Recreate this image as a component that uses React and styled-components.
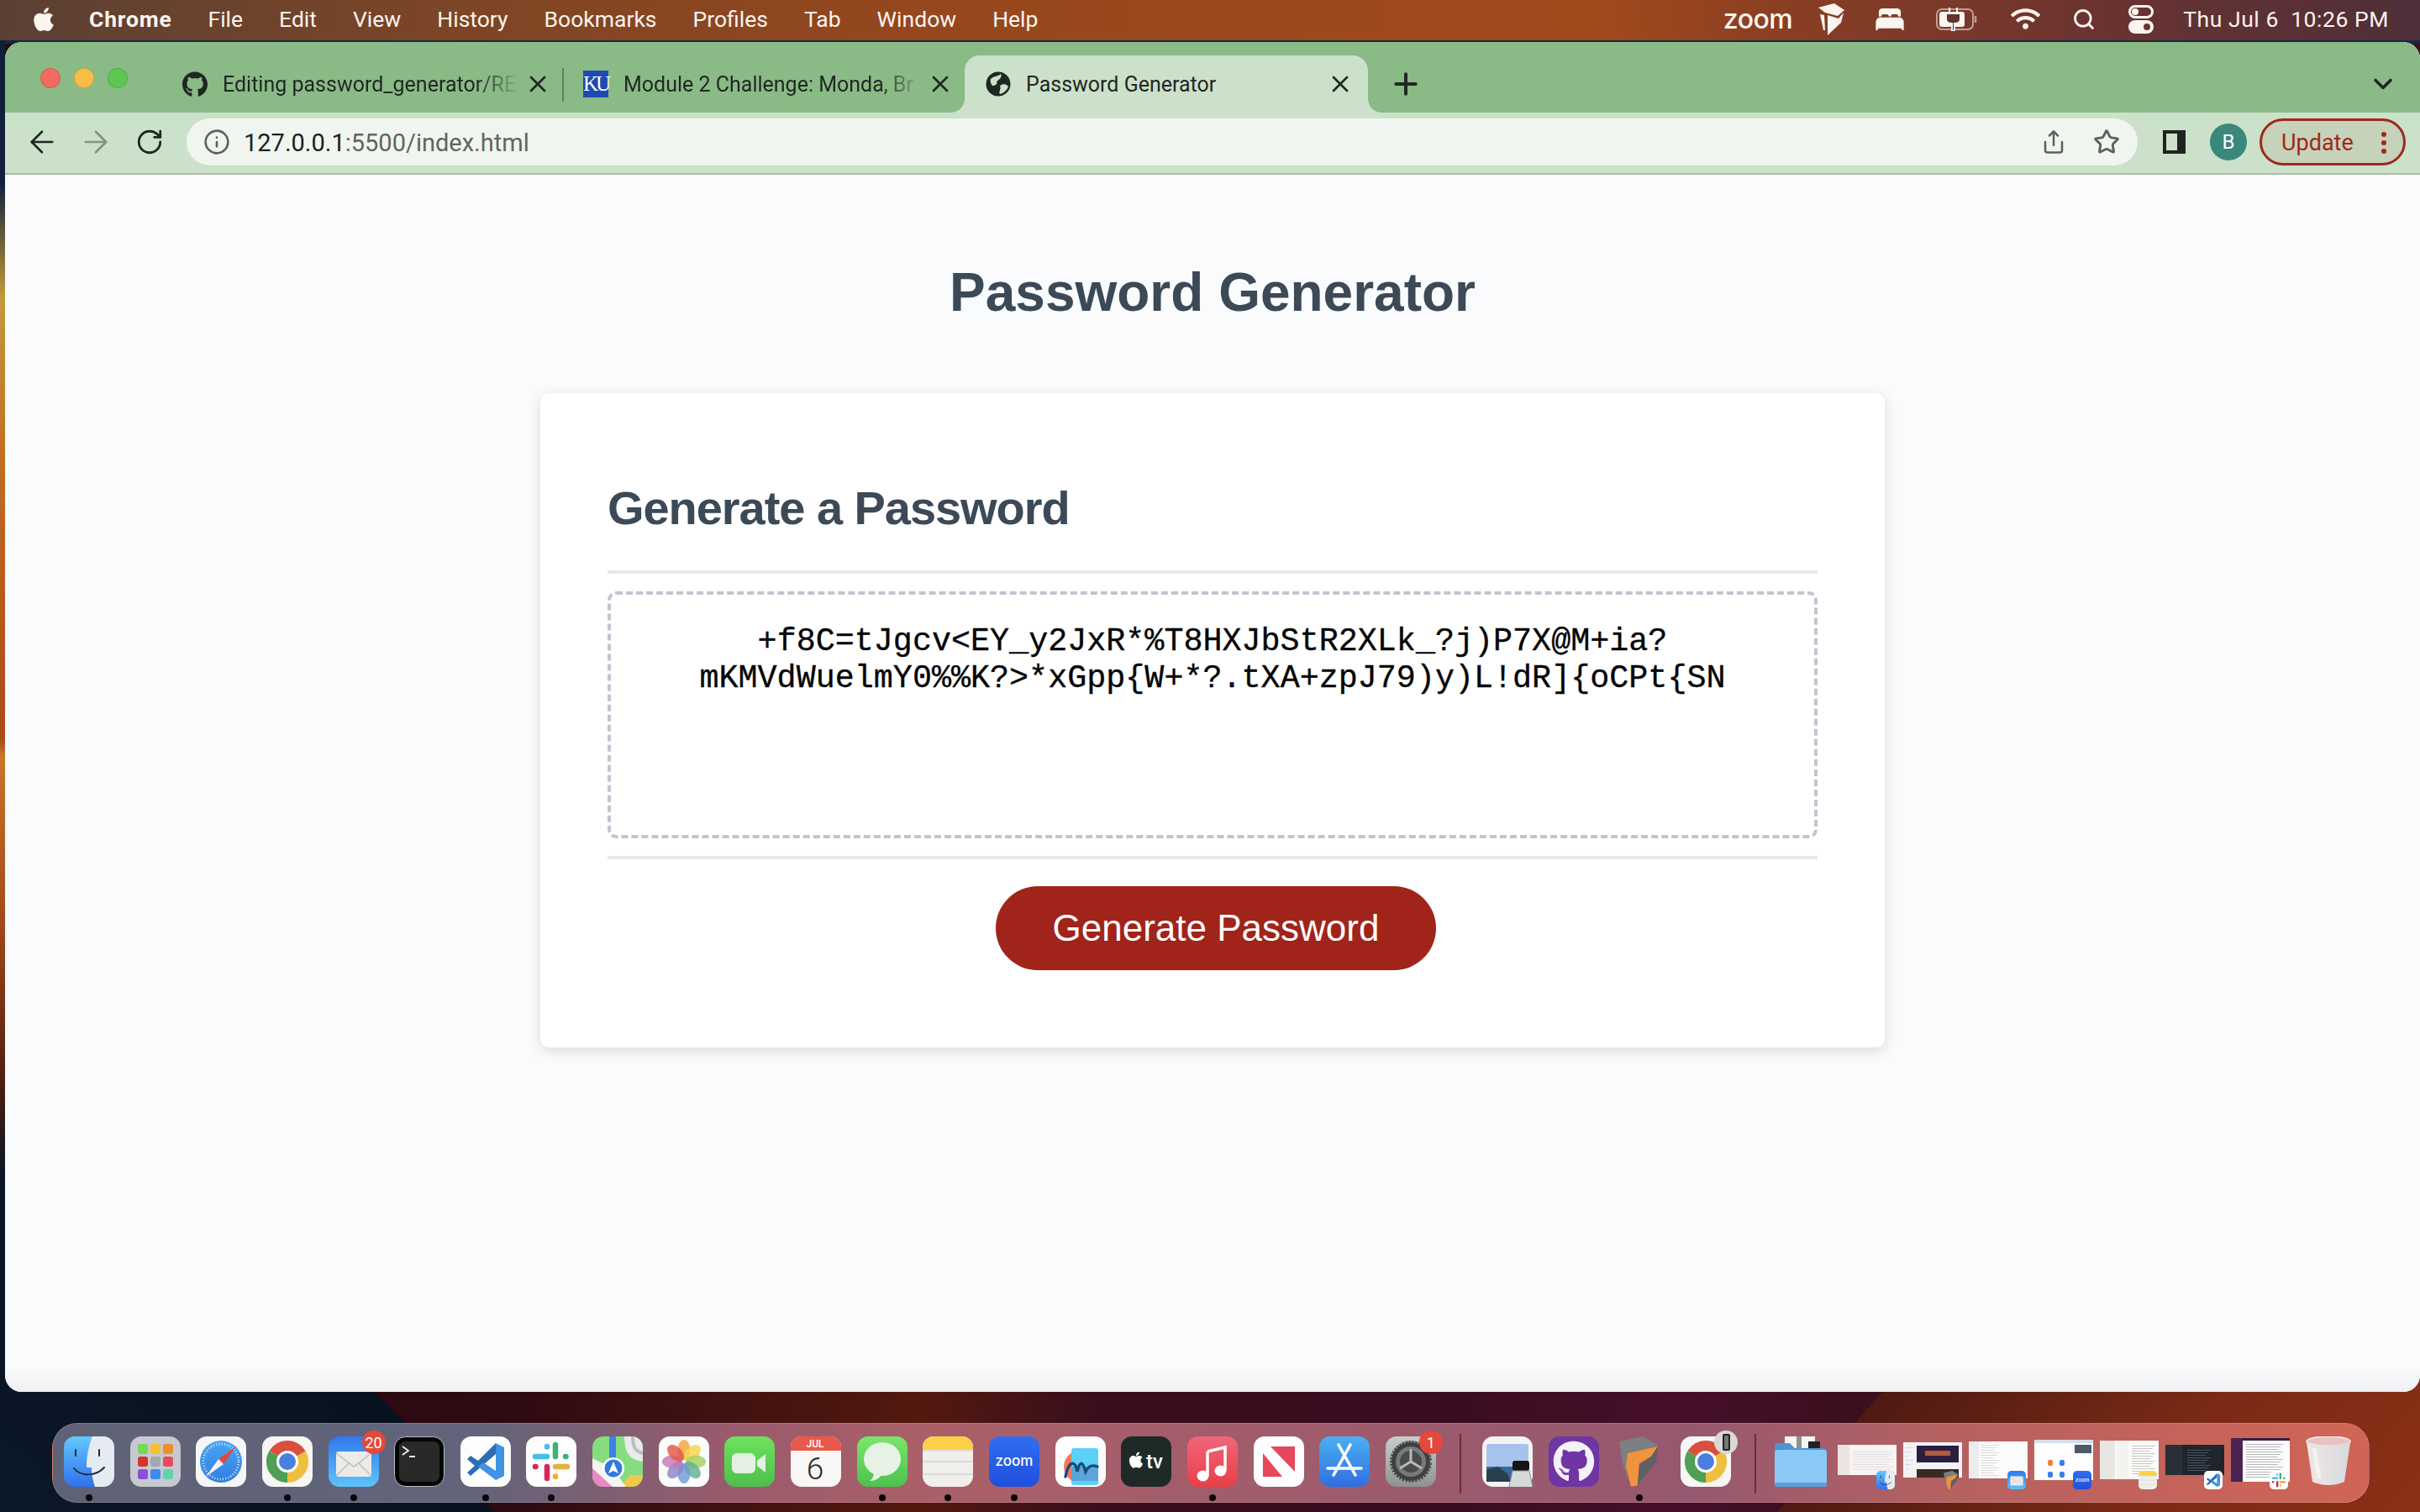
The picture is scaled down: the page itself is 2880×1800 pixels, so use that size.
import React from "react";
import styled, { createGlobalStyle } from "styled-components";
import { FaApple, FaGithub, FaWifi } from "react-icons/fa";
import { IoBed } from "react-icons/io5";
import { ArrowLeft, ArrowRight, RotateCw, Info, Star, Share, Plus, X, ChevronDown, Search } from "lucide-react";

const GlobalStyle = createGlobalStyle`
  html, body {
    margin: 0;
    padding: 0;
    overflow: hidden;
  }
  * {
    box-sizing: border-box;
  }
`;

const UI_FONT = `Roboto, "Liberation Sans", sans-serif`;
const PAGE_FONT = `"Liberation Sans", Arial, sans-serif`;

const Desktop = styled.div`
  width: 2880px;
  height: 1800px;
  display: flex;
  flex-direction: column;
  overflow: hidden;
  background:
    linear-gradient(180deg, #0f1d38 0, #12213d 218px, #c39a3a 354px, #c26a22 560px, #a94a18 880px, #c4772a 900px, #a2481a 1100px, #4a1d10 1295px, #0a1526 1400px) 0 0 / 6px 1660px no-repeat,
    linear-gradient(#16274a, #16274a) 0 48px / 100% 4px no-repeat,
    linear-gradient(131deg, transparent 82.8%, #4e1a13 82.8%, #7a2a15 92%, #8a3016 100%),
    linear-gradient(45deg, #0b1828 0, #08121f 12.6%, transparent 12.6%),
    linear-gradient(90deg, #2a0810 0, #2e0a12 600px, #52190f 1100px, #3a0e1c 1300px, #3a0c20 1700px, #460f2a 2000px, #3c0e1e 2200px);
`;

const MenuBar = styled.header`
  height: 48px;
  flex: none;
  display: flex;
  align-items: center;
  padding: 0 37px 3px 38px;
  color: #fbf4ef;
  font: 400 26.5px ${UI_FONT};
  background: linear-gradient(90deg, #5a4034 0, #7a4526 500px, #96471d 1100px, #a04a1c 1900px, #8c3f22 2100px, #6a3330 2500px, #4e2f39 2880px);
`;

const AppleMark = styled(FaApple)`
  width: 28px;
  height: 32px;
  margin-right: 40px;
`;

const MenuItem = styled.span`
  margin-right: 43px;
  font-weight: ${(p) => (p.$bold ? 700 : 400)};
  letter-spacing: ${(p) => (p.$bold ? "0.8px" : "0")};
`;

const StatusArea = styled.div`
  margin-left: auto;
  display: flex;
  align-items: center;
`;

const ZoomWord = styled.span`
  font: 500 32px Inter, sans-serif;
  letter-spacing: -0.5px;
  margin-right: 30px;
`;

const StatusSlot = styled.span`
  display: flex;
  align-items: center;
  justify-content: center;
  margin-right: ${(p) => p.$gap}px;
`;

const Clock = styled.span`
  white-space: pre;
  letter-spacing: 0.55px;
`;

const BrowserWindow = styled.main`
  margin: 2px 0 0 6px;
  height: 1607px;
  flex: none;
  display: flex;
  flex-direction: column;
  border-radius: 20px;
  overflow: hidden;
  background: #f9fbfd;
`;

const TabStrip = styled.div`
  height: 84px;
  flex: none;
  display: flex;
  padding: 16px 26px 0 42px;
  background: #8aba85;
  color: #1f2723;
  font: 400 25px ${UI_FONT};
`;

const Lights = styled.div`
  display: flex;
  gap: 16px;
  margin: 15px 40px 0 0;
  height: 24px;
`;

const Light = styled.span`
  width: 24px;
  height: 24px;
  border-radius: 50%;
  background: ${(p) => p.$color};
  border: 1px solid rgba(0, 0, 0, 0.12);
`;

const Tab = styled.div`
  position: relative;
  flex: none;
  width: ${(p) => p.$width}px;
  height: 68px;
  display: flex;
  align-items: center;
  padding: 0 ${(p) => p.$right}px 0 ${(p) => p.$pad}px;
  border-radius: 18px 18px 0 0;
  background: ${(p) => (p.$active ? "#cbe1c9" : "transparent")};
  ${(p) =>
    p.$active &&
    `
    &::before, &::after {
      content: "";
      position: absolute;
      bottom: 0;
      width: 16px;
      height: 16px;
    }
    &::before {
      left: -16px;
      background: radial-gradient(circle at 0 0, transparent 15.5px, #cbe1c9 16px);
    }
    &::after {
      right: -16px;
      background: radial-gradient(circle at 100% 0, transparent 15.5px, #cbe1c9 16px);
    }
  `}
`;

const Favicon = styled.span`
  flex: none;
  width: 30px;
  height: 32px;
  margin-right: 18px;
  display: flex;
  align-items: center;
  justify-content: center;
`;

const TabTitle = styled.span`
  flex: 1;
  min-width: 0;
  white-space: nowrap;
  ${(p) =>
    p.$fade &&
    `
    mask-image: linear-gradient(90deg, #000 calc(100% - 50px), transparent 100%);
  `}
`;

const TabClose = styled(X)`
  flex: none;
  width: 32px;
  height: 32px;
  margin: 0 -5px 0 7px;
`;

const TabSeparator = styled.span`
  flex: none;
  width: 2px;
  height: 40px;
  margin-top: 15px;
  background: #5f8059;
`;

const KuBadge = styled.span`
  width: 32px;
  height: 32px;
  background: #2049b3;
  color: #fff;
  font: 400 25px "Liberation Serif", serif;
  letter-spacing: -3px;
  display: flex;
  align-items: center;
  justify-content: center;
`;

const NewTab = styled(Plus)`
  width: 40px;
  height: 40px;
  margin: 14px 0 0 25px;
  color: #1f2723;
`;

const TabList = styled(ChevronDown)`
  width: 36px;
  height: 36px;
  margin: 16px 0 0 auto;
  color: #1f2723;
`;

const Toolbar = styled.div`
  height: 74px;
  flex: none;
  display: flex;
  align-items: center;
  padding: 0 17px 2px 23px;
  background: #cbe1c9;
  border-bottom: 2px solid #a8b9a4;
`;

const NavButtons = styled.div`
  display: flex;
  gap: 22px;
  margin-right: 23px;
`;

const NavIcon = styled.span`
  width: 42px;
  height: 42px;
  display: flex;
  align-items: center;
  justify-content: center;
  color: ${(p) => (p.$dim ? "#7f9580" : "#1f2723")};
`;

const Omnibox = styled.div`
  flex: 1;
  height: 56px;
  border-radius: 28px;
  background: #f0f6ef;
  display: flex;
  align-items: center;
  padding: 2px 21px 0 20px;
  font: 400 29px ${UI_FONT};
  color: #5e6661;
`;

const UrlHost = styled.span`
  color: #1c211e;
`;

const InfoIcon = styled(Info)`
  width: 32px;
  height: 32px;
  margin: -2px 16px 0 0;
  color: #5b625e;
`;

const OmniActions = styled.div`
  margin: -2px 0 0 auto;
  display: flex;
  align-items: center;
  gap: 32px;
  color: #5b625e;
`;

const PanelIcon = styled.span`
  flex: none;
  width: 27px;
  height: 28px;
  margin: 0 29px 0 30px;
  border: solid #1f2421;
  border-width: 4px 10px 4px 4px;
`;

const Avatar = styled.span`
  flex: none;
  width: 44px;
  height: 44px;
  margin-right: 15px;
  border-radius: 50%;
  background: #3a877b;
  color: #fff;
  font: 400 24px ${UI_FONT};
  display: flex;
  align-items: center;
  justify-content: center;
`;

const UpdateButton = styled.div`
  flex: none;
  width: 174px;
  height: 56px;
  border-radius: 28px;
  border: 3px solid #9c2a1e;
  background: #c6d2b9;
  color: #a0281c;
  font: 400 27px ${UI_FONT};
  display: flex;
  align-items: center;
  padding: 2px 0 0 23px;
`;

const KebabDots = styled.span`
  margin-left: auto;
  margin-right: 20px;
  display: flex;
  flex-direction: column;
  gap: 4px;
`;

const KebabDot = styled.i`
  width: 6px;
  height: 6px;
  border-radius: 50%;
  background: #a0281c;
`;

const PageBody = styled.div`
  flex: 1;
  min-height: 0;
  display: flex;
  flex-direction: column;
  align-items: center;
  background: linear-gradient(180deg, #f9fbfd calc(100% - 30px), #eff0f2 100%);
`;

const PageTitle = styled.h1`
  margin: 102px 0 0;
  height: 76px;
  font: 700 64px/76px ${PAGE_FONT};
  color: #3c4957;
`;

const Card = styled.section`
  width: 1600px;
  height: 779px;
  margin-top: 82px;
  padding: 104px 80px 0;
  border-radius: 10px;
  background: #fff;
  box-shadow: 0 4px 16px rgba(0, 0, 0, 0.14);
`;

const CardTitle = styled.h2`
  margin: 0;
  height: 107px;
  font: 700 56px/66px ${PAGE_FONT};
  letter-spacing: -1.05px;
  color: #3c4957;
`;

const Rule = styled.hr`
  margin: 0;
  height: 4px;
  border: none;
  background: #e6e8eb;
`;

const PasswordBox = styled.div`
  height: 294px;
  margin: 21px 0;
  padding: 34px 20px 0;
  border: 4px dashed #c0c6cf;
  border-radius: 10px;
  text-align: center;
  color: #050505;
  font: 400 38.4px/44px "Liberation Mono", "Courier New", monospace;
  -webkit-text-stroke: 0.35px #050505;
`;

const ButtonRow = styled.div`
  display: flex;
  justify-content: center;
  margin-top: 32px;
  padding-left: 8px;
`;

const GenerateButton = styled.button`
  width: 524px;
  height: 100px;
  border: none;
  border-radius: 50px;
  background: #a0241a;
  color: #fff;
  font: 400 44px ${PAGE_FONT};
  cursor: pointer;
`;

const DockWrap = styled.footer`
  margin: 37px 0 0 62px;
  width: 2758px;
  height: 95px;
  flex: none;
  display: flex;
  align-items: flex-start;
  gap: 18.65px;
  padding: 15px 0 0 13px;
  border-radius: 30px;
  border: 1px solid rgba(255, 255, 255, 0.16);
  background: linear-gradient(90deg, #5f6277 0, #61647a 500px, #9a5a6c 800px, #ab6068 1050px, #9e5c6c 1500px, #96586f 1950px, #b56162 2250px, #d06555 2758px);
`;

const Slot = styled.div`
  position: relative;
  flex: none;
  width: ${(p) => p.$width || 60}px;
  height: 60px;
`;

const RunDot = styled.span`
  position: absolute;
  left: 50%;
  bottom: -17px;
  width: 8px;
  height: 8px;
  margin-left: -4px;
  border-radius: 50%;
  background: #0a0508;
`;

const Badge = styled.span`
  position: absolute;
  top: -7px;
  right: -8px;
  min-width: 28px;
  height: 28px;
  border-radius: 50%;
  background: #e5483a;
  color: #fff;
  font: 400 18px ${UI_FONT};
  display: flex;
  align-items: center;
  justify-content: center;
`;

const DeviceBadge = styled(Badge)`
  background: #d9d9d7;
`;

const DeviceGlyph = styled.i`
  width: 9px;
  height: 20px;
  border: 2px solid #222;
  border-radius: 2px;
  background: #777;
`;

const DockDivider = styled.span`
  flex: none;
  width: 2px;
  height: 71px;
  margin: -3px ${(p) => p.$right}px 0 ${(p) => p.$left}px;
  background: #6d2a3f;
`;

const ThumbGroup = styled.div`
  display: flex;
  gap: 8px;
  margin-left: -6px;
`;

const ThumbSlot = styled.div`
  position: relative;
  flex: none;
  width: 70px;
  height: 60px;
  display: flex;
  align-items: center;
  justify-content: center;
  padding-bottom: 4px;
`;

const MiniIcon = styled.span`
  position: absolute;
  right: 2px;
  bottom: -3px;
  width: 22px;
  height: 22px;
  display: flex;
`;

const Sq = ({ fill }) => <rect width="60" height="60" rx="13" fill={fill} />;

const Art = ({ size = 60, children }) => (
  <svg width={size} height={size} viewBox="0 0 60 60" style={{ display: "block" }}>
    {children}
  </svg>
);

const Grad = ({ id, from, to, x2 = 0, y2 = 1 }) => (
  <linearGradient id={id} x1="0" y1="0" x2={x2} y2={y2}>
    <stop offset="0" stopColor={from} />
    <stop offset="1" stopColor={to} />
  </linearGradient>
);

const Finder = ({ size }) => (
  <Art size={size}>
    <defs>
      <Grad id="fnd" from="#62c8fb" to="#2f72ee" />
    </defs>
    <Sq fill="url(#fnd)" />
    <path d="M34 0 H47 A13 13 0 0 1 60 13 V47 A13 13 0 0 1 47 60 H37 C34 50 33 44 33 37 H27 C27 22 30 10 34 0 Z" fill="#e6ebf2" />
    <path d="M14 16 v7 M42 16 v7" stroke="#1d2a3c" strokeWidth="2" strokeLinecap="round" />
    <path d="M12 38 C20 48 38 48 48 37" stroke="#1d2a3c" strokeWidth="2" fill="none" strokeLinecap="round" />
  </Art>
);

const Launchpad = ({ size }) => {
  const colors = ["#72dc50", "#f5c12e", "#ec8f2c", "#d2352b", "#a4a9ad", "#e94b5b", "#8a4fd8", "#3d8bf0", "#62d4ab"];
  return (
    <Art size={size}>
      <Sq fill="#c6c9cf" />
      {colors.map((c, i) => (
        <rect key={c} x={9 + (i % 3) * 15} y={9 + Math.floor(i / 3) * 15} width="12" height="12" rx="3" fill={c} />
      ))}
    </Art>
  );
};

const Safari = ({ size }) => (
  <Art size={size}>
    <defs>
      <Grad id="saf" from="#4ba6f3" to="#2f7de0" />
    </defs>
    <Sq fill="#f5f6f7" />
    <circle cx="30" cy="30" r="25" fill="url(#saf)" />
    <circle cx="30" cy="30" r="21" fill="none" stroke="#d5e8fb" strokeWidth="3" strokeDasharray="1 2.3" />
    <path d="M48 12 L33 33 L27 27 Z" fill="#e8453c" />
    <path d="M12 48 L27 27 L33 33 Z" fill="#f4f4f4" />
  </Art>
);

const Chrome = ({ size }) => (
  <Art size={size}>
    <Sq fill="#f6f6f5" />
    <path d="M30 30 L8.3 17.5 A25 25 0 0 1 51.7 17.5 Z" fill="#d8503f" />
    <path d="M30 30 L51.7 17.5 A25 25 0 0 1 30 55 Z" fill="#efbf42" />
    <path d="M30 30 L30 55 A25 25 0 0 1 8.3 17.5 Z" fill="#4f9f55" />
    <circle cx="30" cy="30" r="13" fill="#fff" />
    <circle cx="30" cy="30" r="10" fill="#4a7fe0" />
  </Art>
);

const Mail = ({ size }) => (
  <Art size={size}>
    <defs>
      <Grad id="mail" from="#3278ee" to="#5cc4f8" />
    </defs>
    <Sq fill="url(#mail)" />
    <rect x="9" y="18" width="42" height="30" rx="3" fill="#ecebe8" />
    <path d="M9 20 L30 36 L51 20 M9 47 L24 32 M51 47 L36 32" fill="none" stroke="#bdbdb9" strokeWidth="1.4" />
  </Art>
);

const Terminal = ({ size }) => (
  <Art size={size}>
    <rect x="0.5" y="0.5" width="59" height="59" rx="13" fill="#050505" stroke="#b4c0c4" />
    <rect x="6" y="6" width="48" height="48" rx="7" fill="#292929" />
    <path d="M10 12 L17 17 L10 22" fill="none" stroke="#f2f2f2" strokeWidth="1.8" />
    <path d="M18 24 H25" stroke="#f2f2f2" strokeWidth="2" />
  </Art>
);

const VSCode = ({ size }) => (
  <Art size={size}>
    <Sq fill="#fdfdfd" />
    <path d="M8 27 L12 23 L21 29 L42 8 V21 L27 34 L12 47 L8 43 L17 35 Z" fill="#2a6db5" />
    <path d="M42 8 L52 13 V47 L42 52 L21 36 L27 31 L42 41 Z" fill="#3f93e2" />
  </Art>
);

const Slack = ({ size }) => (
  <Art size={size}>
    <Sq fill="#fdfdfd" />
    <g fill="none" strokeWidth="6.5" strokeLinecap="round">
      <path d="M11 24 H25 M25 12 V12.5" stroke="#45bfe6" />
      <path d="M35 10 V24 M47 24 H47.5" stroke="#3fb07d" />
      <path d="M35 36 H49 M35 48 V47.5" stroke="#e3b33c" />
      <path d="M25 36 V50 M11 36 H11.5" stroke="#d8265a" />
    </g>
  </Art>
);

const Maps = ({ size }) => (
  <Art size={size}>
    <defs>
      <clipPath id="mapclip">
        <rect width="60" height="60" rx="13" />
      </clipPath>
    </defs>
    <g clipPath="url(#mapclip)">
      <rect width="60" height="60" fill="#85dd80" />
      <path d="M0 30 L24 60 H0 Z" fill="#e58ac2" />
      <path d="M34 60 L60 60 V46 L44 46 Z" fill="#f0c84a" />
      <path d="M0 26 L24 38 L40 60 H24 L0 38 Z" fill="#f4f4f0" />
      <path d="M60 0 H38 C38 22 46 28 60 30 Z" fill="#e8ebe8" />
      <path d="M48 0 C48 14 52 18 60 20" fill="none" stroke="#bcbec0" strokeWidth="4" />
      <rect x="20" y="0" width="8" height="28" fill="#3c82ea" />
      <circle cx="25" cy="38" r="13" fill="#fff" />
      <circle cx="25" cy="38" r="10.5" fill="#3278e0" />
      <path d="M25 30 L31 44 L25 41 L19 44 Z" fill="#fff" />
    </g>
  </Art>
);

const Photos = ({ size }) => {
  const petals = ["#f2a53a", "#f3d64e", "#a7cf5f", "#60b08f", "#6e9bd8", "#8d84cb", "#c677b8", "#e2574a"];
  return (
    <Art size={size}>
      <Sq fill="#fbfbfa" />
      {petals.map((c, i) => (
        <ellipse key={c} cx="30" cy="16" rx="7.5" ry="12" fill={c} opacity="0.82" transform={`rotate(${i * 45} 30 30)`} />
      ))}
    </Art>
  );
};

const FaceTime = ({ size }) => (
  <Art size={size}>
    <defs>
      <Grad id="ft" from="#6fe15e" to="#4cc04c" />
    </defs>
    <Sq fill="url(#ft)" />
    <rect x="9" y="20" width="28" height="24" rx="6" fill="#e4f1e2" />
    <path d="M39 29 L49 21 V43 L39 35 Z" fill="#e4f1e2" />
  </Art>
);

const Calendar = ({ size }) => (
  <Art size={size}>
    <Sq fill="#f8f7f5" />
    <path d="M0 17 V13 A13 13 0 0 1 13 0 H47 A13 13 0 0 1 60 13 V17 Z" fill="#e8594c" />
    <text x="29" y="13" textAnchor="middle" fontFamily="Roboto, sans-serif" fontSize="12" fontWeight="500" fill="#fff">JUL</text>
    <text x="29" y="51" textAnchor="middle" fontFamily="Roboto, sans-serif" fontSize="37" fontWeight="300" fill="#2a2a2a">6</text>
  </Art>
);

const Messages = ({ size }) => (
  <Art size={size}>
    <defs>
      <Grad id="msg" from="#7be56a" to="#4cc24e" />
    </defs>
    <Sq fill="url(#msg)" />
    <ellipse cx="30" cy="27" rx="22" ry="20" fill="#e6f2e3" />
    <path d="M20 42 C20 48 18 51 15 53 C22 53 26 50 29 46 Z" fill="#e6f2e3" />
  </Art>
);

const Notes = ({ size }) => (
  <Art size={size}>
    <Sq fill="#f1efeb" />
    <path d="M0 16 V13 A13 13 0 0 1 13 0 H47 A13 13 0 0 1 60 13 V16 Z" fill="#fbd14a" />
    <path d="M0 17 H60" stroke="#a9a7a2" strokeWidth="1" strokeDasharray="1 1" />
    <path d="M0 30 H60 M0 45 H60" stroke="#dcdbdb" strokeWidth="2" />
  </Art>
);

const ZoomApp = ({ size }) => (
  <Art size={size}>
    <defs>
      <Grad id="zm" from="#2f6ff0" to="#1f4fdd" />
    </defs>
    <Sq fill="url(#zm)" />
    <text x="30" y="35" textAnchor="middle" fontFamily="Inter, sans-serif" fontSize="17" fontWeight="500" fill="#fff">zoom</text>
  </Art>
);

const Freeform = ({ size }) => (
  <Art size={size}>
    <Sq fill="#fdfdfd" />
    <circle cx="29" cy="36" r="19" fill="#ee7a5c" />
    <rect x="19" y="14" width="32" height="44" rx="3" fill="#5cd0f5" />
    <rect x="19" y="36" width="32" height="17" fill="#5aa6dc" />
    <path d="M12 48 C16 28 24 28 26 42 C29 30 32 28 36 42 C40 34 44 34 50 36" fill="none" stroke="#1b4a78" strokeWidth="3.4" strokeLinecap="round" />
  </Art>
);

const AppleTv = ({ size }) => (
  <Art size={size}>
    <Sq fill="#1d2a28" />
    <FaApple x="7" y="17" size="22" color="#fff" />
    <text x="30" y="38" fontFamily="Roboto, sans-serif" fontSize="24" fontWeight="500" fill="#fff">tv</text>
  </Art>
);

const Music = ({ size }) => (
  <Art size={size}>
    <defs>
      <Grad id="mus" from="#f0667a" to="#e83f48" />
    </defs>
    <Sq fill="url(#mus)" />
    <path d="M24 18 L45 13 V40 M24 18 V47" fill="none" stroke="#fff" strokeWidth="3.5" />
    <ellipse cx="18.5" cy="47" rx="7" ry="6.5" fill="#fff" />
    <ellipse cx="39.5" cy="41" rx="7" ry="6.5" fill="#fff" />
  </Art>
);

const News = ({ size }) => (
  <Art size={size}>
    <Sq fill="#fdfdfd" />
    <path d="M11 12 H19 L49 40 V48 H41 L11 20 Z" fill="#fdfdfd" />
    <path d="M11 20 L34 48 H11 Z" fill="#e6475a" />
    <path d="M20 12 H49 V42 Z" fill="#e6475a" />
  </Art>
);

const AppStore = ({ size }) => (
  <Art size={size}>
    <defs>
      <Grad id="aps" from="#4cb0f3" to="#2f6fe0" />
    </defs>
    <Sq fill="url(#aps)" />
    <path d="M23 10 L43 46 M37 10 L17 46 M10 38 H50" stroke="#fff" strokeWidth="3.6" strokeLinecap="round" fill="none" />
  </Art>
);

const Settings = ({ size }) => (
  <Art size={size}>
    <defs>
      <Grad id="set" from="#c9cdcd" to="#8e9290" />
    </defs>
    <Sq fill="url(#set)" />
    <circle cx="30" cy="30" r="25" fill="#3e4140" />
    <circle cx="30" cy="30" r="24" fill="none" stroke="#9a9d9c" strokeWidth="2.4" strokeDasharray="2 2" />
    <circle cx="30" cy="30" r="18" fill="#77797a" />
    <circle cx="30" cy="30" r="13" fill="#4a4c4c" />
    <path d="M30 30 V15 M30 30 L17 38 M30 30 L43 38" stroke="#b9bbba" strokeWidth="3" />
  </Art>
);

const Preview = ({ size }) => (
  <Art size={size}>
    <Sq fill="#f3f3f1" />
    <rect x="5" y="9" width="50" height="45" rx="3" fill="#a6c3ee" />
    <rect x="5" y="36" width="50" height="18" fill="#356a9a" />
    <path d="M5 40 L18 36 L30 44 L34 54 H5 Z" fill="#2b3e50" />
    <rect x="36" y="29" width="20" height="12" rx="3" fill="#151515" />
    <path d="M36 41 H56 L60 60 Q46 66 32 60 Z" fill="#d5dad9" stroke="#8c9192" />
  </Art>
);

const GithubDesktop = ({ size }) => (
  <Art size={size}>
    <Sq fill="#6e35a3" />
    <FaGithub x="5" y="5" size="50" color="#f5f1f8" />
  </Art>
);

const Vpn = ({ size }) => (
  <Art size={size}>
    <path d="M6 6 L34 0 L52 10 L42 22 L16 20 L16 50 L10 32 Z" fill="#7c7f80" />
    <path d="M16 20 L52 12 L44 24 L30 32 L28 58 L20 60 L14 36 Z" fill="#f0933d" />
    <path d="M44 24 L52 12 L50 30 L28 58 L30 34 Z" fill="#5e6162" />
  </Art>
);

const Folder = () => (
  <svg width="62" height="60" viewBox="0 0 62 60" style={{ display: "block" }}>
    <rect x="12" y="0" width="36" height="22" fill="#f4f4f4" />
    <rect x="26" y="0" width="6" height="14" fill="#8f9090" />
    <rect x="40" y="6" width="14" height="16" fill="#222" />
    <path d="M0 12 Q0 8 4 8 H18 L24 14 H58 Q62 14 62 18 V24 H0 Z" fill="#4f94d6" />
    <rect x="0" y="16" width="62" height="44" rx="4" fill="#8ac9f6" />
    <rect x="0" y="55" width="62" height="5" rx="2" fill="#5a9fda" />
  </svg>
);

const Trash = () => (
  <svg width="54" height="60" viewBox="0 0 54 60" style={{ display: "block" }}>
    <defs>
      <Grad id="trs" from="#f0e6e6" to="#d6dbdd" x2="1" y2="0" />
    </defs>
    <ellipse cx="27" cy="6" rx="26" ry="6" fill="#e8c2c0" stroke="#f2f2f2" strokeWidth="1.5" />
    <path d="M1 7 L8 54 Q27 62 46 54 L53 7 Q27 14 1 7 Z" fill="url(#trs)" />
    <path d="M10 14 L16 50" stroke="#fff" strokeWidth="5" opacity="0.55" />
  </svg>
);

const ThumbArt = ({ h, bg, children }) => (
  <svg width="70" height={h} viewBox={`0 0 70 ${h}`} style={{ display: "block" }}>
    <rect width="70" height={h} fill={bg} />
    {children}
  </svg>
);

const lines = (x, y, w, n, step, color) =>
  Array.from({ length: n }, (_, i) => (
    <rect key={`${x}-${i}`} x={x} y={y + i * step} width={w - (i % 3) * 3} height="1" fill={color} opacity="0.6" />
  ));

const thumbs = [
  {
    id: "finder",
    mini: Finder,
    art: (
      <ThumbArt h={36} bg="#f9f3f3">
        <rect width="14" height="36" fill="#ece3e3" />
        {lines(18, 8, 48, 8, 3, "#cdd3dc")}
      </ThumbArt>
    ),
  },
  {
    id: "vpn",
    mini: Vpn,
    art: (
      <ThumbArt h={42} bg="#f3f3f5">
        <rect x="16" y="4" width="50" height="20" fill="#2c1f3f" />
        <rect x="26" y="10" width="30" height="6" fill="#b25a3c" />
        <rect x="16" y="32" width="50" height="10" fill="#3a2a22" />
        {lines(2, 6, 10, 6, 5, "#c8c8d0")}
      </ThumbArt>
    ),
  },
  {
    id: "mail",
    mini: Mail,
    art: (
      <ThumbArt h={44} bg="#fbfbfb">
        <rect width="12" height="44" fill="#ececec" />
        {lines(14, 4, 22, 13, 3, "#c4c4c4")}
      </ThumbArt>
    ),
  },
  {
    id: "zoom",
    mini: ZoomApp,
    art: (
      <ThumbArt h={48} bg="#fdfdfd">
        <rect width="70" height="4" fill="#d6dee8" />
        <rect x="48" y="6" width="20" height="10" fill="#4a5a6a" />
        <rect x="16" y="24" width="6" height="7" rx="2" fill="#ee8136" />
        <rect x="30" y="24" width="6" height="7" rx="2" fill="#3b7ee8" />
        <rect x="16" y="38" width="6" height="7" rx="2" fill="#3b7ee8" />
        <rect x="30" y="38" width="6" height="7" rx="2" fill="#3b7ee8" />
      </ThumbArt>
    ),
  },
  {
    id: "notes",
    mini: Notes,
    art: (
      <ThumbArt h={46} bg="#fbfbfa">
        <rect width="18" height="46" fill="#e8e6e2" />
        <rect x="20" width="14" height="46" fill="#f4f3f0" />
        {lines(38, 6, 28, 12, 3, "#a9a5a0")}
      </ThumbArt>
    ),
  },
  {
    id: "vscode",
    mini: VSCode,
    art: (
      <ThumbArt h={36} bg="#20252b">
        <rect width="20" height="36" fill="#2a2f36" />
        {lines(26, 6, 28, 9, 3, "#5c7486")}
      </ThumbArt>
    ),
  },
  {
    id: "slack",
    mini: Slack,
    art: (
      <ThumbArt h={52} bg="#fbfbfb">
        <rect width="70" height="3" fill="#3c1d44" />
        <rect width="14" height="52" fill="#4a2352" />
        {lines(18, 7, 44, 14, 3, "#8c8c8c")}
      </ThumbArt>
    ),
  },
];

const dockApps = [
  { id: "finder", Icon: Finder, dot: true },
  { id: "launchpad", Icon: Launchpad },
  { id: "safari", Icon: Safari },
  { id: "chrome", Icon: Chrome, dot: true },
  { id: "mail", Icon: Mail, dot: true, badge: "20" },
  { id: "terminal", Icon: Terminal },
  { id: "vscode", Icon: VSCode, dot: true },
  { id: "slack", Icon: Slack, dot: true },
  { id: "maps", Icon: Maps },
  { id: "photos", Icon: Photos },
  { id: "facetime", Icon: FaceTime },
  { id: "calendar", Icon: Calendar },
  { id: "messages", Icon: Messages, dot: true },
  { id: "notes", Icon: Notes, dot: true },
  { id: "zoom", Icon: ZoomApp, dot: true },
  { id: "freeform", Icon: Freeform },
  { id: "tv", Icon: AppleTv },
  { id: "music", Icon: Music, dot: true },
  { id: "news", Icon: News },
  { id: "appstore", Icon: AppStore },
  { id: "settings", Icon: Settings, badge: "1" },
];

const BatteryGlyph = () => (
  <svg width="50" height="28" viewBox="0 0 50 28">
    <rect x="1" y="2" width="43" height="24" rx="6" fill="none" stroke="#fbf4ef" strokeOpacity="0.55" strokeWidth="2" />
    <rect x="4" y="5" width="30" height="18" rx="3" fill="#fbf4ef" />
    <path d="M47 10 V18" stroke="#fbf4ef" strokeOpacity="0.55" strokeWidth="2.5" />
    <path d="M16 0 V8 M25 0 V8 M12 7 H29 V14 Q29 19 22 19 V28 H19 V19 Q12 19 12 14 Z" fill="#5e3530" stroke="#fbf4ef" strokeWidth="2" />
  </svg>
);

const ControlGlyph = () => (
  <svg width="30" height="34" viewBox="0 0 30 34">
    <rect x="1.5" y="1.5" width="27" height="13" rx="6.5" fill="none" stroke="#fbf4ef" strokeWidth="3" />
    <circle cx="8" cy="8" r="4" fill="#fbf4ef" />
    <rect x="0" y="18" width="30" height="16" rx="8" fill="#fbf4ef" />
    <circle cx="22" cy="26" r="4" fill="#6a3330" />
  </svg>
);

const VpnGlyph = () => (
  <svg width="32" height="38" viewBox="0 0 32 38">
    <path d="M1 5 L20 0 L32 8 L24 15 L9 11 Z" fill="#fbf4ef" />
    <path d="M3 13 L8 14 L9 32 L7 32 Z" fill="#fbf4ef" />
    <path d="M12 14 L25 18 L31 11 L28 23 L12 38 Z" fill="#fbf4ef" />
  </svg>
);

const App = () => {
  const menus = ["File", "Edit", "View", "History", "Bookmarks", "Profiles", "Tab", "Window", "Help"];

  return (
    <Desktop>
      <GlobalStyle />
      <MenuBar>
        <AppleMark />
        <MenuItem $bold>Chrome</MenuItem>
        {menus.map((m) => (
          <MenuItem key={m}>{m}</MenuItem>
        ))}
        <StatusArea>
          <ZoomWord>zoom</ZoomWord>
          <StatusSlot $gap={35}><VpnGlyph /></StatusSlot>
          <StatusSlot $gap={36}><IoBed size={38} /></StatusSlot>
          <StatusSlot $gap={39}><BatteryGlyph /></StatusSlot>
          <StatusSlot $gap={38}><FaWifi size={35} /></StatusSlot>
          <StatusSlot $gap={39}><Search size={28} strokeWidth={2.4} /></StatusSlot>
          <StatusSlot $gap={35}><ControlGlyph /></StatusSlot>
          <Clock>Thu Jul 6  10:26 PM</Clock>
        </StatusArea>
      </MenuBar>

      <BrowserWindow>
        <TabStrip>
          <Lights>
            <Light $color="#f36a60" />
            <Light $color="#f8bd47" />
            <Light $color="#5ec655" />
          </Lights>
          <Tab $width={477} $pad={25} $right={18}>
            <Favicon><FaGithub size={31} color="#1f2723" /></Favicon>
            <TabTitle $fade>Editing password_generator/RE</TabTitle>
            <TabClose />
          </Tab>
          <TabSeparator />
          <Tab $width={477} $pad={23} $right={18}>
            <Favicon><KuBadge>KU</KuBadge></Favicon>
            <TabTitle $fade>Module 2 Challenge: Monda, Br</TabTitle>
            <TabClose />
          </Tab>
          <Tab $width={480} $pad={25} $right={22} $active>
            <Favicon>
              <svg width="30" height="30" viewBox="0 0 30 30">
                <circle cx="15" cy="15" r="14.5" fill="#1f2723" />
                <path d="M6 9 C10 5 15 6 18 3 C20 7 16 10 13 12 C15 15 11 17 8 17 C6 14 5 12 6 9 Z M17 17 C21 14 25 15 27 18 C25 23 21 26 17 27 C15 24 19 21 17 17 Z" fill="#cbe1c9" />
              </svg>
            </Favicon>
            <TabTitle>Password Generator</TabTitle>
            <TabClose />
          </Tab>
          <NewTab strokeWidth={2.4} />
          <TabList strokeWidth={2.4} />
        </TabStrip>

        <Toolbar>
          <NavButtons>
            <NavIcon><ArrowLeft size={42} strokeWidth={1.5} /></NavIcon>
            <NavIcon $dim><ArrowRight size={42} strokeWidth={1.5} /></NavIcon>
            <NavIcon><RotateCw size={34} strokeWidth={2} /></NavIcon>
          </NavButtons>
          <Omnibox>
            <InfoIcon strokeWidth={2} />
            <UrlHost>127.0.0.1</UrlHost>:5500/index.html
            <OmniActions>
              <Share size={30} strokeWidth={2} />
              <Star size={32} strokeWidth={2.2} />
            </OmniActions>
          </Omnibox>
          <PanelIcon />
          <Avatar>B</Avatar>
          <UpdateButton>
            Update
            <KebabDots>
              <KebabDot />
              <KebabDot />
              <KebabDot />
            </KebabDots>
          </UpdateButton>
        </Toolbar>

        <PageBody>
          <PageTitle>Password Generator</PageTitle>
          <Card>
            <CardTitle>Generate a Password</CardTitle>
            <Rule />
            <PasswordBox>
              +f8C=tJgcv&lt;EY_y2JxR*%T8HXJbStR2XLk_?j)P7X@M+ia?
              <br />
              mKMVdWuelmY0%%K?&gt;*xGpp{"{"}W+*?.tXA+zpJ79)y)L!dR]{"{"}oCPt{"{"}SN
            </PasswordBox>
            <Rule />
            <ButtonRow>
              <GenerateButton type="button">Generate Password</GenerateButton>
            </ButtonRow>
          </Card>
        </PageBody>
      </BrowserWindow>

      <DockWrap>
        {dockApps.map(({ id, Icon, dot, badge }) => (
          <Slot key={id}>
            <Icon />
            {dot && <RunDot />}
            {badge && <Badge>{badge}</Badge>}
          </Slot>
        ))}
        <DockDivider $left={10} $right={6} />
        <Slot><Preview /></Slot>
        <Slot><GithubDesktop /></Slot>
        <Slot>
          <Vpn />
          <RunDot />
        </Slot>
        <Slot>
          <Chrome />
          <DeviceBadge><DeviceGlyph /></DeviceBadge>
        </Slot>
        <DockDivider $left={9} $right={4} />
        <Slot $width={62}><Folder /></Slot>
        <ThumbGroup>
          {thumbs.map(({ id, art, mini: Mini }) => (
            <ThumbSlot key={id}>
              {art}
              <MiniIcon><Mini size={22} /></MiniIcon>
            </ThumbSlot>
          ))}
        </ThumbGroup>
        <Slot $width={54}><Trash /></Slot>
      </DockWrap>
    </Desktop>
  );
};

export default App;
